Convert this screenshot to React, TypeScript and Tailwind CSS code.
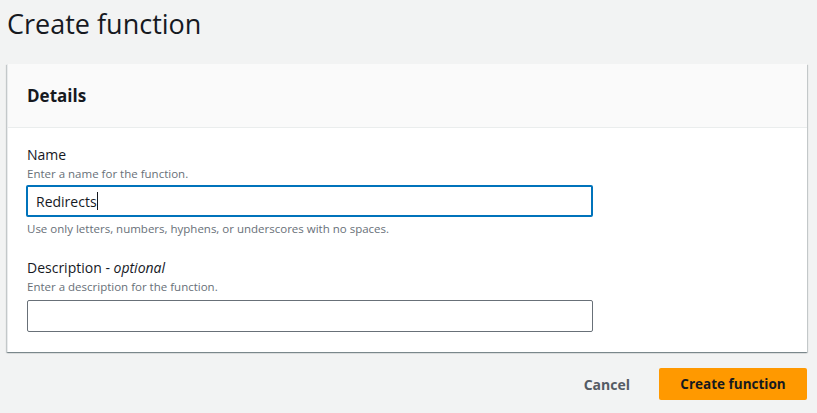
import React from "react";

export default function App() {
  return (
    <div className="w-[817px] h-[413px] bg-[#f2f3f3] text-[#16191f] overflow-hidden" style={{ fontFamily: '"Open Sans", "Noto Sans", sans-serif' }}>
      <h1 className="pl-[7px] pt-[6px] h-[64px] text-[27px] leading-[36px] font-normal text-[#16191f]">Create function</h1>
      <div className="ml-[7px] w-[800px] bg-white border-l border-[#e9ebed] shadow-[0_1px_1px_0_rgba(0,28,36,0.3),1px_1px_1px_0_rgba(0,28,36,0.15),-1px_1px_1px_0_rgba(0,28,36,0.15)]">
        <div className="h-[64px] bg-[#fafafa] border-b border-[#eaeded] flex items-center px-[19px]">
          <h2 className="text-[17px] font-bold leading-[22px] text-[#16191f]">Details</h2>
        </div>
        <div className="px-[19px] pt-[16px] pb-[20px]">
          <div className="text-[14px] leading-[22px] text-[#16191f]">Name</div>
          <div className="text-[11.5px] leading-[16px] text-[#687078]">Enter a name for the function.</div>
          <div className="mt-[3px] -ml-px w-[567px] h-[32px] border-2 border-[#0073bb] rounded-[2px] flex items-center px-[8px] text-[14px] text-[#16191f]">
            Redirects<span className="w-px h-[18px] bg-[#16191f]" />
          </div>
          <div className="mt-[4px] text-[11.5px] leading-[16px] text-[#687078]">Use only letters, numbers, hyphens, or underscores with no spaces.</div>
          <div className="mt-[20px] text-[14px] leading-[22px] text-[#16191f]">
            Description - <span className="italic">optional</span>
          </div>
          <div className="text-[11.5px] leading-[16px] text-[#687078]">Enter a description for the function.</div>
          <div className="mt-[5px] w-[566px] h-[32px] border border-[#687078] rounded-[2px]" />
        </div>
      </div>
      <div className="flex justify-end items-center gap-[29px] pr-[10px] mt-[16px]">
        <span className="text-[14px] font-bold text-[#545b64]">Cancel</span>
        <div className="w-[148px] h-[32px] bg-[#ff9900] rounded-[2px] flex items-center justify-center text-[13.5px] font-bold text-[#16191f]">Create function</div>
      </div>
    </div>
  );
}
